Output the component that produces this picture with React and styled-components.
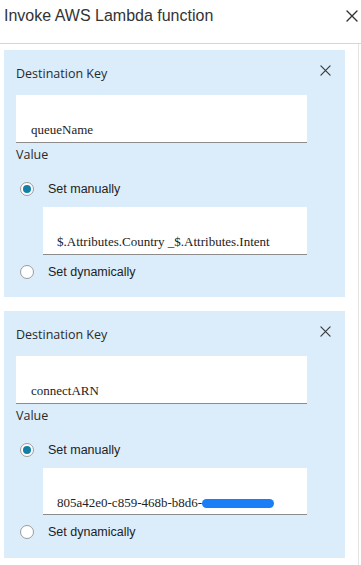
import React from "react";
import styled, { createGlobalStyle } from "styled-components";

const Global = createGlobalStyle`
  html, body { margin: 0; padding: 0; background: #ffffff; }
  body { font-family: "Liberation Sans", Arial, sans-serif; color: #333; }
  * { box-sizing: border-box; }
`;

const Page = styled.div`
  width: 361px;
  height: 565px;
  display: flex;
  flex-direction: column;
  overflow: hidden;
`;

const Header = styled.div`
  height: 44px;
  flex: none;
  display: flex;
  align-items: flex-start;
  justify-content: space-between;
  padding: 6px 3px 0 4px;
  border-bottom: 1px solid #d6d6d6;
`;

const Title = styled.h1`
  margin: 0;
  font-family: "Liberation Sans", Arial, sans-serif;
  font-weight: 400;
  font-size: 16px;
  line-height: 20px;
  color: #333;
`;

const CloseIcon = ({ size = 11, stroke = "#444", width = 1.4 }) => (
  <svg width={size} height={size} viewBox="0 0 12 12" aria-hidden="true">
    <path d="M1 1 L11 11 M11 1 L1 11" stroke={stroke} strokeWidth={width} strokeLinecap="round" fill="none" />
  </svg>
);

const HeaderClose = styled.span`
  display: flex;
  margin-top: 4px;
`;

const Body = styled.div`
  flex: 1;
  display: flex;
`;

const Scroll = styled.div`
  width: 359px;
  border-right: 1px solid #e4e4e4;
  padding: 6px 0 0 4px;
  display: flex;
  flex-direction: column;
  gap: 14px;
`;

const Panel = styled.section`
  width: 341px;
  height: 247px;
  background: #dbedfb;
  padding: 0 12px 0 12px;
  display: flex;
  flex-direction: column;
`;

const PanelHead = styled.div`
  height: 45px;
  display: flex;
  justify-content: space-between;
  align-items: flex-start;
  padding-top: 16px;
`;

const FieldLabel = styled.div`
  font-family: "Open Sans", "Noto Sans", sans-serif;
  font-size: 12.5px;
  line-height: 16px;
  color: #2a2a2a;
  margin-top: ${(p) => p.$mt || 0}px;
`;

const PanelClose = styled.span`
  display: flex;
  margin-top: -1px;
  margin-right: 2px;
`;

const TextBox = styled.div`
  width: ${(p) => (p.$indent ? 264 : 291)}px;
  height: ${(p) => p.$h || 48}px;
  margin-left: ${(p) => (p.$indent ? 27 : 0)}px;
  margin-top: ${(p) => p.$mt || 0}px;
  background: #ffffff;
  border-bottom: 1px solid #8c8c8c;
  padding: 27px 0 0 ${(p) => (p.$indent ? 14 : 15)}px;
  font-family: "Liberation Serif", "Times New Roman", serif;
  font-size: 13px;
  line-height: 16px;
  color: #222;
  white-space: nowrap;
`;

const RadioRow = styled.label`
  height: 20px;
  display: flex;
  align-items: center;
  margin-top: ${(p) => p.$mt || 0}px;
  padding-left: 4px;
  font-family: "Liberation Sans", Arial, sans-serif;
  font-size: 12.5px;
  color: #222;
`;

const RadioDot = styled.span`
  width: 14px;
  height: 14px;
  border-radius: 50%;
  border: 1px solid #9b9b9b;
  background: #ffffff;
  display: flex;
  align-items: center;
  justify-content: center;
  margin-right: 14px;
  flex: none;

  &::after {
    content: "";
    width: 8px;
    height: 8px;
    border-radius: 50%;
    background: ${(p) => (p.$checked ? "#137fa6" : "transparent")};
  }
`;

const Redacted = styled.span`
  display: inline-block;
  width: 72px;
  height: 9px;
  border-radius: 5px;
  background: #1a7ff6;
  vertical-align: -1px;
`;

const entries = [
  { key: "queueName", value: "$.Attributes.Country _$.Attributes.Intent", redact: false, h: 48 },
  { key: "connectARN", value: "805a42e0-c859-468b-b8d6-", redact: true, h: 47 },
];

function Entry({ item }) {
  return (
    <Panel>
      <PanelHead>
        <FieldLabel>Destination Key</FieldLabel>
        <PanelClose>
          <CloseIcon size={11} stroke="#3a3a3a" width={1.3} />
        </PanelClose>
      </PanelHead>
      <TextBox>{item.key}</TextBox>
      <FieldLabel $mt={4}>Value</FieldLabel>
      <RadioRow $mt={16}>
        <RadioDot $checked />
        Set manually
      </RadioRow>
      <TextBox $indent $mt={8} $h={item.h}>
        {item.value}
        {item.redact && <Redacted />}
      </TextBox>
      <RadioRow $mt={7}>
        <RadioDot />
        Set dynamically
      </RadioRow>
    </Panel>
  );
}

export default function App() {
  return (
    <Page>
      <Global />
      <Header>
        <Title>Invoke AWS Lambda function</Title>
        <HeaderClose>
          <CloseIcon size={12} stroke="#333" width={1.4} />
        </HeaderClose>
      </Header>
      <Body>
        <Scroll>
          {entries.map((e) => (
            <Entry key={e.key} item={e} />
          ))}
        </Scroll>
      </Body>
    </Page>
  );
}
